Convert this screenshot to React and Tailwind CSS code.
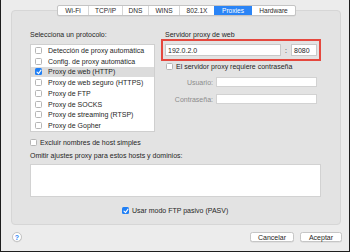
import React from "react";

const Check = ({ checked, className = "" }) =>
  checked ? (
    <div className={"w-[7px] h-[7px] rounded-[1.5px] bg-[#1f7ff5] flex items-center justify-center shrink-0 " + className}>
      <svg width="6" height="6" viewBox="0 0 6 6">
        <path d="M1 3.2 L2.5 4.6 L5 1.2" stroke="white" strokeWidth="1.1" fill="none" strokeLinecap="round" strokeLinejoin="round" />
      </svg>
    </div>
  ) : (
    <div className={"w-[7px] h-[7px] rounded-[1.5px] bg-white border border-[#b5b5b5] shrink-0 " + className} />
  );

const tabs = [
  ["Wi-Fi", 30],
  ["TCP/IP", 34],
  ["DNS", 26],
  ["WINS", 31],
  ["802.1X", 35],
  ["Proxies", 38],
  ["Hardware", 43],
];

const protocols = [
  ["Detección de proxy automática", false, false],
  ["Config. de proxy automática", false, false],
  ["Proxy de web (HTTP)", true, true],
  ["Proxy de web seguro (HTTPS)", false, false],
  ["Proxy de FTP", false, false],
  ["Proxy de SOCKS", false, false],
  ["Proxy de streaming (RTSP)", false, false],
  ["Proxy de Gopher", false, false],
];

export default function App() {
  return (
    <div
      className="w-[350px] h-[252px] bg-[#ececec] border-l border-r border-b border-[#1e1e1e] text-[7px] leading-[9px] text-[#262626] overflow-hidden flex flex-col"
      style={{ fontFamily: '"Liberation Sans", Arial, sans-serif' }}
    >
      {/* Tabs */}
      <div className="relative z-10 mt-[5px] ml-[56px] flex h-[11px] w-fit bg-white border border-[#c4c4c4] rounded-[2px] shadow-[0_0.5px_0.5px_rgba(0,0,0,0.08)]">
        {tabs.map(([t, w], i) => (
          <div
            key={t}
            style={{ width: w }}
            className={
              "h-full flex items-center justify-center text-[6.6px] " +
              (t === "Proxies"
                ? "bg-[#2a84f6] text-white"
                : "text-[#2a2a2a] " + (i > 0 && tabs[i - 1][0] !== "Proxies" ? "border-l border-[#d6d6d6]" : ""))
            }
          >
            {t}
          </div>
        ))}
      </div>

      {/* Panel */}
      <div className="-mt-[6px] ml-[10px] w-[330px] h-[215px] bg-[#e3e3e3] border border-[#d6d6d6] rounded-[4px] pt-[19px] pl-[18px] flex flex-col">
        <div className="flex">
          {/* Left column */}
          <div className="w-[125px] flex flex-col">
            <div className="h-[9px]">Selecciona un protocolo:</div>
            <div className="mt-[5px] h-[88px] bg-white border border-[#cfcfcf] flex flex-col">
              {protocols.map(([label, checked, sel]) => (
                <div
                  key={label}
                  className={"h-[11px] flex items-center pl-[4px] " + (sel ? "bg-[#dcdcdc]" : "")}
                >
                  <Check checked={checked} />
                  <span className="ml-[6px] whitespace-nowrap">{label}</span>
                </div>
              ))}
            </div>
          </div>

          {/* Right column */}
          <div className="ml-[6px] flex flex-col">
            <div className="h-[9px] pl-[4px]">Servidor proxy de web</div>
            <div className="w-[160px] h-[22px] border-2 border-[#e5483e] flex items-center pl-[2px]">
              <div className="w-[116px] h-[12px] bg-white border border-[#c9c9c9] flex items-center pl-[2px]">192.0.2.0</div>
              <div className="w-[10px] text-center">:</div>
              <div className="w-[26px] h-[12px] bg-white border border-[#c9c9c9] flex items-center pl-[2px]">8080</div>
            </div>
            <div className="mt-[1px] h-[9px] flex items-center pl-[5px]">
              <Check />
              <span className="ml-[3px] whitespace-nowrap">El servidor proxy requiere contraseña</span>
            </div>
            <div className="mt-[6px] flex items-center h-[10px]">
              <div className="w-[52px] text-right text-[#8c8c8c]">Usuario:</div>
              <div className="ml-[3px] w-[101px] h-[10px] bg-white border border-[#d2d2d2]" />
            </div>
            <div className="mt-[7px] flex items-center h-[10px]">
              <div className="w-[52px] text-right text-[#8c8c8c]">Contraseña:</div>
              <div className="ml-[3px] w-[101px] h-[10px] bg-white border border-[#d2d2d2]" />
            </div>
          </div>
        </div>

        <div className="mt-[6px] h-[9px] flex items-center">
          <Check />
          <span className="ml-[3px]">Excluir nombres de host simples</span>
        </div>
        <div className="mt-[4px] h-[9px]">Omitir ajustes proxy para estos hosts y dominios:</div>
        <div className="mt-[4px] w-[291px] h-[33px] bg-white border border-[#d2d2d2]" />
        <div className="mt-[9px] h-[9px] flex items-center pl-[92px]">
          <Check checked />
          <span className="ml-[3px]">Usar modo FTP pasivo (PASV)</span>
        </div>
      </div>

      {/* Bottom bar */}
      <div className="flex items-center mt-[7px] pl-[11px] pr-[7px]">
        <div className="w-[10px] h-[10px] rounded-full bg-white border border-[#c4c4c4] flex items-center justify-center text-[7px] font-bold text-[#2a84f6] shadow-[0_0.5px_0.5px_rgba(0,0,0,0.1)]">
          ?
        </div>
        <div className="flex-1" />
        <div className="w-[44px] h-[10px] bg-white border border-[#c6c6c6] rounded-[2.5px] flex items-center justify-center shadow-[0_0.5px_0.5px_rgba(0,0,0,0.1)]">
          Cancelar
        </div>
        <div className="ml-[6px] w-[42px] h-[10px] bg-white border border-[#c6c6c6] rounded-[2.5px] flex items-center justify-center shadow-[0_0.5px_0.5px_rgba(0,0,0,0.1)]">
          Aceptar
        </div>
      </div>
    </div>
  );
}
